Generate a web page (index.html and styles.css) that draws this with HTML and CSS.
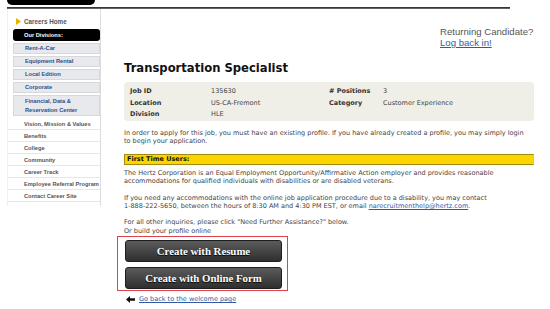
FILE: index.html
```html
<!DOCTYPE html>
<html lang="en">
<head>
  <meta charset="UTF-8" />
  <title>Transportation Specialist</title>
  <link rel="stylesheet" href="styles.css">
</head>
<body>
  <div class="page">
    <div class="topTab"></div>
    <div class="topLine"></div>

    <div class="layout">
      <div class="sidebar">
        <div class="homeLink">
          <svg class="homeIcon" width="5" height="7" viewBox="0 0 5 7"><polygon points="0,0 5,3.5 0,7" fill="#e2b400"/></svg>
          <span>Careers Home</span>
        </div>
        <div class="divHead">Our Divisions:</div>
        <div class="divItem">Rent-A-Car</div>
        <div class="divItem">Equipment Rental</div>
        <div class="divItem">Local Edition</div>
        <div class="divItem">Corporate</div>
        <div class="divItem">Financial, Data &amp;<br>Reservation Center</div>

        <ul class="sideLinks">
          <li>Vision, Mission &amp; Values</li>
          <li>Benefits</li>
          <li>College</li>
          <li>Community</li>
          <li>Career Track</li>
          <li>Employee Referral Program</li>
          <li>Contact Career Site</li>
        </ul>
      </div>

      <div class="main">
        <div class="returning">
          Returning Candidate?<br>
          <a href="#">Log back in!</a>
        </div>

        <h1>Transportation Specialist</h1>

        <div class="jobBox">
          <div class="jobCol">
            <div class="jobRow"><b>Job ID</b><span>135630</span></div>
            <div class="jobRow"><b>Location</b><span>US-CA-Fremont</span></div>
            <div class="jobRow"><b>Division</b><span>HLE</span></div>
          </div>
          <div class="jobCol">
            <div class="jobRow"><b># Positions</b><span>3</span></div>
            <div class="jobRow"><b>Category</b><span>Customer Experience</span></div>
          </div>
        </div>

        <p>In order to apply for this job, you must have an existing profile. If you have already created a profile, you may simply login<br>to begin your application.</p>

        <div class="firstTime">First Time Users:</div>

        <p class="tight">The Hertz Corporation is an Equal Employment Opportunity/Affirmative Action employer and provides reasonable<br>accommodations for qualified individuals with disabilities or are disabled veterans.</p>

        <p>If you need any accommodations with the online job application procedure due to a disability, you may contact<br>1-888-222-5650, between the hours of 8:30 AM and 4:30 PM EST, or email <a href="#">narecruitmenthelp@hertz.com</a>.</p>

        <p>For all other inquiries, please click "Need Further Assistance?" below.<br>Or build your profile online</p>

        <div class="createBox">
          <button>Create with Resume</button>
          <button>Create with Online Form</button>
        </div>

        <div class="backLink">
          <svg width="9" height="7" viewBox="0 0 9 7"><polygon points="0,3.5 4,0 4,2.3 9,2.3 9,4.7 4,4.7 4,7" fill="#111"/></svg>
          <a href="#">Go back to the welcome page</a>
        </div>
      </div>
    </div>
  </div>
</body>
</html>
```

FILE: styles.css
```css
* {
  box-sizing: border-box;
  margin: 0;
  padding: 0;
}

body {
  font-family: "DejaVu Sans", Verdana, sans-serif;
  color: #444;
  background: #fff;
}

.page {
  margin-left: 7px;
  width: 528px;
}

.topTab {
  width: 88px;
  height: 5px;
  background: #000;
  border-radius: 0 0 5px 5px;
}

.topLine {
  width: 503px;
  height: 2px;
  margin-top: 2px;
  background: linear-gradient(#222, #777);
}

.layout {
  display: flex;
  align-items: flex-start;
}

/* left navigation */
.sidebar {
  width: 94px;
  flex-shrink: 0;
  border-left: 1px solid #f0f0f0;
  border-right: 1px solid #ddd;
  padding: 7px 0 4px;
  font-family: "Liberation Sans", Arial, sans-serif;
  font-size: 5.7px;
  font-weight: bold;
  white-space: nowrap;
}

.homeLink {
  display: flex;
  align-items: center;
  height: 10px;
  padding-left: 8px;
  gap: 3px;
  color: #555;
  font-size: 6.3px;
}

.divHead {
  margin: 3px 0 2px 5px;
  height: 12px;
  line-height: 12px;
  background: #000;
  color: #fff;
  border-radius: 3px;
  padding-left: 11px;
}

.divItem {
  margin: 0 0 2px 5px;
  min-height: 10px;
  line-height: 9px;
  padding: 0 0 0 11px;
  background: #e7e9ec;
  border: 1px solid #d6d8dc;
  color: #2c4f8c;
}

.divItem:last-of-type {
  padding: 1px 0 1px 11px;
  line-height: 8.5px;
}

.sideLinks {
  list-style: none;
  margin-top: 2px;
  color: #555;
}

.sideLinks li {
  height: 12px;
  line-height: 12px;
  padding-left: 16px;
  border-bottom: 1px solid #e6e6e6;
}

/* main column */
.main {
  width: 410px;
  margin-left: 23px;
  font-size: 6.5px;
  line-height: 8.4px;
  white-space: nowrap;
}

.returning {
  margin: 17px 0 0 316px;
  font-family: "Liberation Sans", Arial, sans-serif;
  font-size: 9.6px;
  line-height: 11px;
  color: #555;
}

.returning a {
  color: #2d5ca6;
}

h1 {
  margin-top: 13px;
  font-size: 11.6px;
  line-height: 14px;
  color: #111;
}

.jobBox {
  display: flex;
  margin-top: 7px;
  height: 39px;
  padding: 4px 6px 0;
  background: #efeee7;
  border-radius: 4px;
  line-height: 11.5px;
}

.jobCol {
  width: 228px;
}

.jobRow {
  display: flex;
}

.jobRow b {
  width: 81px;
  color: #333;
}

.jobCol + .jobCol .jobRow b {
  width: 54px;
}

p {
  margin-top: 8px;
}

.firstTime {
  margin-top: 8px;
  height: 11px;
  line-height: 9px;
  padding-left: 2px;
  background: #fcd400;
  border: 1px solid #a08a10;
  border-right-color: #f0d000;
  color: #111;
  font-weight: bold;
}

p.tight {
  margin-top: 4px;
}

p a, .backLink a {
  color: #2d5ca6;
}

.createBox {
  width: 171px;
  margin: 1px 0 0 -7px;
  padding: 3px 6px 1px 7px;
  border: 1px solid #e0424c;
}

.createBox button {
  display: block;
  width: 157px;
  height: 22px;
  margin-bottom: 5px;
  border: 1px solid #1e1e1e;
  border-radius: 3px;
  background: linear-gradient(#5b5b5b, #2f2f2f);
  color: #fff;
  font-family: "Liberation Serif", "Times New Roman", serif;
  font-weight: bold;
  font-size: 10.8px;
  text-shadow: 0 1px 1px #000;
}

.createBox button:last-child {
  margin-bottom: 0;
}

.backLink {
  display: flex;
  align-items: center;
  gap: 4px;
  margin: 4px 0 0 2px;
}
```
